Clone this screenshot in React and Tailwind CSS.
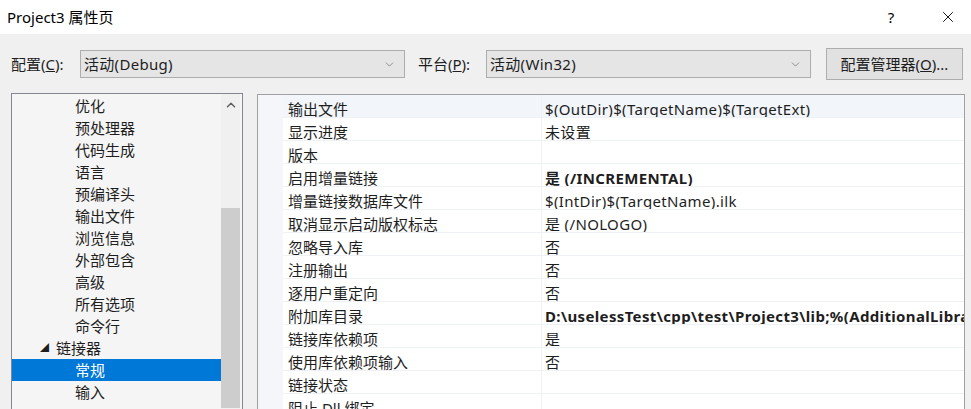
import { ChevronDown, ChevronUp, X } from 'lucide-react';

const treeItems = [
  { label: '优化', level: 1 },
  { label: '预处理器', level: 1 },
  { label: '代码生成', level: 1 },
  { label: '语言', level: 1 },
  { label: '预编译头', level: 1 },
  { label: '输出文件', level: 1 },
  { label: '浏览信息', level: 1 },
  { label: '外部包含', level: 1 },
  { label: '高级', level: 1 },
  { label: '所有选项', level: 1 },
  { label: '命令行', level: 1 },
  { label: '链接器', level: 0, open: true },
  { label: '常规', level: 1, selected: true },
  { label: '输入', level: 1 },
];

const props = [
  ['输出文件', '$(OutDir)$(TargetName)$(TargetExt)'],
  ['显示进度', '未设置'],
  ['版本', ''],
  ['启用增量链接', '是 (/INCREMENTAL)', true],
  ['增量链接数据库文件', '$(IntDir)$(TargetName).ilk'],
  ['取消显示启动版权标志', '是 (/NOLOGO)'],
  ['忽略导入库', '否'],
  ['注册输出', '否'],
  ['逐用户重定向', '否'],
  ['附加库目录', 'D:\\uselessTest\\cpp\\test\\Project3\\lib;%(AdditionalLibraryDirectories)', true],
  ['链接库依赖项', '是'],
  ['使用库依赖项输入', '否'],
  ['链接状态', ''],
  ['阻止 Dll 绑定', ''],
];

function Combo({ value, className }) {
  return (
    <div
      className={`h-[28px] border border-[#adadad] bg-[#e5e5e5] flex items-center justify-between pl-[3px] pr-[8px] ${className}`}
    >
      <span className="leading-none tracking-[0.3px]">{value}</span>
      <ChevronDown size={13} strokeWidth={1.2} className="text-[#606060]" />
    </div>
  );
}

export default function App() {
  return (
    <div
      className="w-[971px] h-[409px] overflow-hidden bg-[#f0f0f0] text-[15px] text-[#1e1e1e]"
      style={{ fontFamily: '"Noto Sans", "Noto Sans CJK SC", sans-serif' }}
    >
      {/* Title bar */}
      <div className="h-[34px] bg-white flex items-center pl-[7px]">
        <span className="flex-1 text-[15px] text-black">Project3 属性页</span>
        <span className="w-[20px] text-center text-[15px] text-black mr-[38px]">?</span>
        <X size={18} strokeWidth={1.2} className="text-black mr-[14px]" />
      </div>

      {/* Configuration / platform selectors */}
      <div className="flex items-center pt-[14px] pl-[11px]">
        <span className="w-[69px]">
          配置(<span className="underline">C</span>):
        </span>
        <Combo value="活动(Debug)" className="w-[325px]" />
        <span className="ml-[13px] w-[68px]">
          平台(<span className="underline">P</span>):
        </span>
        <Combo value="活动(Win32)" className="w-[325px]" />
        <button className="ml-[15px] w-[137px] h-[32px] border border-[#adadad] bg-[#e1e1e1] text-[15px]">
          配置管理器(<span className="underline">O</span>)...
        </button>
      </div>

      {/* Tree and property grid */}
      <div className="flex items-start pt-[13px] pl-[11px]">
        <div className="w-[232px] h-[330px] border border-[#828790] bg-[#f5f5f5] flex">
          <div className="flex-1 pt-[1px]">
            {treeItems.map((item) => (
              <div
                key={item.label}
                className={`h-[22px] flex items-center ${
                  item.selected ? 'bg-[#0078d7] text-white' : ''
                } ${item.level === 1 ? 'pl-[63px]' : 'pl-[28px]'}`}
              >
                {item.level === 0 && (
                  <span className="w-[16px] text-[9px] text-[#1e1e1e]">◢</span>
                )}
                <span className="leading-none">{item.label}</span>
              </div>
            ))}
          </div>
          <div className="w-[19px] bg-[#f0f0f0] flex flex-col items-center mr-[2px]">
            <ChevronUp size={14} strokeWidth={2.5} className="text-[#606060] mt-[4px]" />
            <div className="w-full bg-[#cdcdcd] h-[200px] mt-[96px]" />
          </div>
        </div>

        <div className="ml-[14px] mt-[1px] w-[708px] h-[330px] border border-[#a0a0a0] border-b-0 bg-white flex overflow-hidden">
          <div className="w-[25px] shrink-0 bg-[#f4f6fa]" />
          <div className="flex-1 min-w-0">
            {props.map(([name, value, bold], i) => (
              <div
                key={name}
                className={`h-[23px] flex border-b border-[#eef1f6] ${
                  i === 0 ? 'bg-[#f2f5fa]' : ''
                }`}
              >
                <div className="w-[259px] shrink-0 border-r border-[#eef1f6] pl-[5px] pt-[6px] flex items-center">
                  <span className="leading-none">{name}</span>
                </div>
                <div className="flex-1 min-w-0 pl-[3px] pt-[6px] flex items-center overflow-hidden whitespace-nowrap">
                  <span className={`leading-none tracking-[0.35px] ${bold ? 'font-bold' : ''}`}>
                    {value}
                  </span>
                </div>
              </div>
            ))}
          </div>
        </div>
      </div>
    </div>
  );
}
